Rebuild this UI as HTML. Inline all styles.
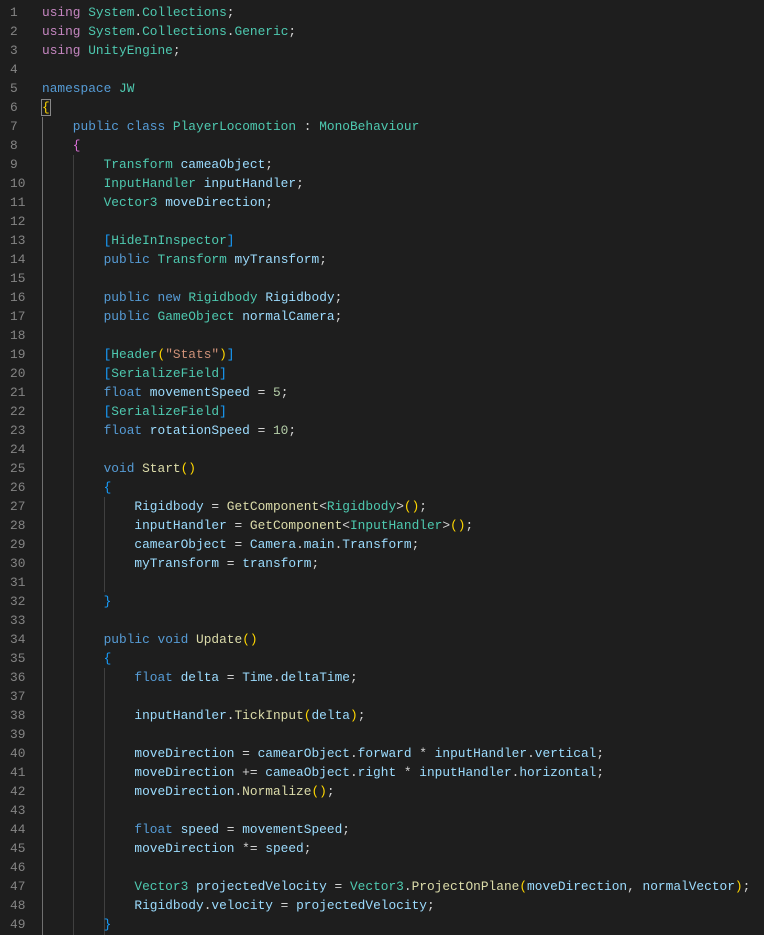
<!DOCTYPE html>
<html><head><meta charset="utf-8"><style>
html,body{margin:0;padding:0;background:#1e1e1e;width:764px;height:935px;overflow:hidden}
.l{position:absolute;left:0;height:19px;line-height:19px;font-family:"Liberation Mono",monospace;font-size:12.83px;white-space:pre;color:#d4d4d4}
.n{position:absolute;left:10px;color:#858585}
.c{position:absolute;left:42px}
.g{position:absolute;width:1px;background:#404040}
.k{color:#569cd6}.u{color:#c586c0}.t{color:#4ec9b0}.v{color:#9cdcfe}.f{color:#dcdcaa}.s{color:#ce9178}.d{color:#b5cea8}
.y{color:#ffd700}.p{color:#da70d6}.b{color:#179fff}
.box{outline:1px solid #888;}
</style></head><body>
<div class="g" style="left:42px;top:117px;height:818px;background:#707070"></div>
<div class="g" style="left:73px;top:155px;height:780px"></div>
<div class="g" style="left:104px;top:497px;height:95px"></div>
<div class="g" style="left:104px;top:668px;height:267px"></div>
<div class="l" style="top:3px"><span class="n">1</span><span class="c"><span class="u">using</span> <span class="t">System</span>.<span class="t">Collections</span>;</span></div>
<div class="l" style="top:22px"><span class="n">2</span><span class="c"><span class="u">using</span> <span class="t">System</span>.<span class="t">Collections</span>.<span class="t">Generic</span>;</span></div>
<div class="l" style="top:41px"><span class="n">3</span><span class="c"><span class="u">using</span> <span class="t">UnityEngine</span>;</span></div>
<div class="l" style="top:60px"><span class="n">4</span></div>
<div class="l" style="top:79px"><span class="n">5</span><span class="c"><span class="k">namespace</span> <span class="t">JW</span></span></div>
<div class="l" style="top:98px"><span class="n">6</span><span class="c"><span class="y box">{</span></span></div>
<div class="l" style="top:117px"><span class="n">7</span><span class="c">    <span class="k">public</span> <span class="k">class</span> <span class="t">PlayerLocomotion</span> : <span class="t">MonoBehaviour</span></span></div>
<div class="l" style="top:136px"><span class="n">8</span><span class="c">    <span class="p">{</span></span></div>
<div class="l" style="top:155px"><span class="n">9</span><span class="c">        <span class="t">Transform</span> <span class="v">cameaObject</span>;</span></div>
<div class="l" style="top:174px"><span class="n">10</span><span class="c">        <span class="t">InputHandler</span> <span class="v">inputHandler</span>;</span></div>
<div class="l" style="top:193px"><span class="n">11</span><span class="c">        <span class="t">Vector3</span> <span class="v">moveDirection</span>;</span></div>
<div class="l" style="top:212px"><span class="n">12</span></div>
<div class="l" style="top:231px"><span class="n">13</span><span class="c">        <span class="b">[</span><span class="t">HideInInspector</span><span class="b">]</span></span></div>
<div class="l" style="top:250px"><span class="n">14</span><span class="c">        <span class="k">public</span> <span class="t">Transform</span> <span class="v">myTransform</span>;</span></div>
<div class="l" style="top:269px"><span class="n">15</span></div>
<div class="l" style="top:288px"><span class="n">16</span><span class="c">        <span class="k">public</span> <span class="k">new</span> <span class="t">Rigidbody</span> <span class="v">Rigidbody</span>;</span></div>
<div class="l" style="top:307px"><span class="n">17</span><span class="c">        <span class="k">public</span> <span class="t">GameObject</span> <span class="v">normalCamera</span>;</span></div>
<div class="l" style="top:326px"><span class="n">18</span></div>
<div class="l" style="top:345px"><span class="n">19</span><span class="c">        <span class="b">[</span><span class="t">Header</span><span class="y">(</span><span class="s">"Stats"</span><span class="y">)</span><span class="b">]</span></span></div>
<div class="l" style="top:364px"><span class="n">20</span><span class="c">        <span class="b">[</span><span class="t">SerializeField</span><span class="b">]</span></span></div>
<div class="l" style="top:383px"><span class="n">21</span><span class="c">        <span class="k">float</span> <span class="v">movementSpeed</span> = <span class="d">5</span>;</span></div>
<div class="l" style="top:402px"><span class="n">22</span><span class="c">        <span class="b">[</span><span class="t">SerializeField</span><span class="b">]</span></span></div>
<div class="l" style="top:421px"><span class="n">23</span><span class="c">        <span class="k">float</span> <span class="v">rotationSpeed</span> = <span class="d">10</span>;</span></div>
<div class="l" style="top:440px"><span class="n">24</span></div>
<div class="l" style="top:459px"><span class="n">25</span><span class="c">        <span class="k">void</span> <span class="f">Start</span><span class="y">()</span></span></div>
<div class="l" style="top:478px"><span class="n">26</span><span class="c">        <span class="b">{</span></span></div>
<div class="l" style="top:497px"><span class="n">27</span><span class="c">            <span class="v">Rigidbody</span> = <span class="f">GetComponent</span>&lt;<span class="t">Rigidbody</span>&gt;<span class="y">()</span>;</span></div>
<div class="l" style="top:516px"><span class="n">28</span><span class="c">            <span class="v">inputHandler</span> = <span class="f">GetComponent</span>&lt;<span class="t">InputHandler</span>&gt;<span class="y">()</span>;</span></div>
<div class="l" style="top:535px"><span class="n">29</span><span class="c">            <span class="v">camearObject</span> = <span class="v">Camera</span>.<span class="v">main</span>.<span class="v">Transform</span>;</span></div>
<div class="l" style="top:554px"><span class="n">30</span><span class="c">            <span class="v">myTransform</span> = <span class="v">transform</span>;</span></div>
<div class="l" style="top:573px"><span class="n">31</span></div>
<div class="l" style="top:592px"><span class="n">32</span><span class="c">        <span class="b">}</span></span></div>
<div class="l" style="top:611px"><span class="n">33</span></div>
<div class="l" style="top:630px"><span class="n">34</span><span class="c">        <span class="k">public</span> <span class="k">void</span> <span class="f">Update</span><span class="y">()</span></span></div>
<div class="l" style="top:649px"><span class="n">35</span><span class="c">        <span class="b">{</span></span></div>
<div class="l" style="top:668px"><span class="n">36</span><span class="c">            <span class="k">float</span> <span class="v">delta</span> = <span class="v">Time</span>.<span class="v">deltaTime</span>;</span></div>
<div class="l" style="top:687px"><span class="n">37</span></div>
<div class="l" style="top:706px"><span class="n">38</span><span class="c">            <span class="v">inputHandler</span>.<span class="f">TickInput</span><span class="y">(</span><span class="v">delta</span><span class="y">)</span>;</span></div>
<div class="l" style="top:725px"><span class="n">39</span></div>
<div class="l" style="top:744px"><span class="n">40</span><span class="c">            <span class="v">moveDirection</span> = <span class="v">camearObject</span>.<span class="v">forward</span> * <span class="v">inputHandler</span>.<span class="v">vertical</span>;</span></div>
<div class="l" style="top:763px"><span class="n">41</span><span class="c">            <span class="v">moveDirection</span> += <span class="v">cameaObject</span>.<span class="v">right</span> * <span class="v">inputHandler</span>.<span class="v">horizontal</span>;</span></div>
<div class="l" style="top:782px"><span class="n">42</span><span class="c">            <span class="v">moveDirection</span>.<span class="f">Normalize</span><span class="y">()</span>;</span></div>
<div class="l" style="top:801px"><span class="n">43</span></div>
<div class="l" style="top:820px"><span class="n">44</span><span class="c">            <span class="k">float</span> <span class="v">speed</span> = <span class="v">movementSpeed</span>;</span></div>
<div class="l" style="top:839px"><span class="n">45</span><span class="c">            <span class="v">moveDirection</span> *= <span class="v">speed</span>;</span></div>
<div class="l" style="top:858px"><span class="n">46</span></div>
<div class="l" style="top:877px"><span class="n">47</span><span class="c">            <span class="t">Vector3</span> <span class="v">projectedVelocity</span> = <span class="t">Vector3</span>.<span class="f">ProjectOnPlane</span><span class="y">(</span><span class="v">moveDirection</span>, <span class="v">normalVector</span><span class="y">)</span>;</span></div>
<div class="l" style="top:896px"><span class="n">48</span><span class="c">            <span class="v">Rigidbody</span>.<span class="v">velocity</span> = <span class="v">projectedVelocity</span>;</span></div>
<div class="l" style="top:915px"><span class="n">49</span><span class="c">        <span class="b">}</span></span></div>
</body></html>
